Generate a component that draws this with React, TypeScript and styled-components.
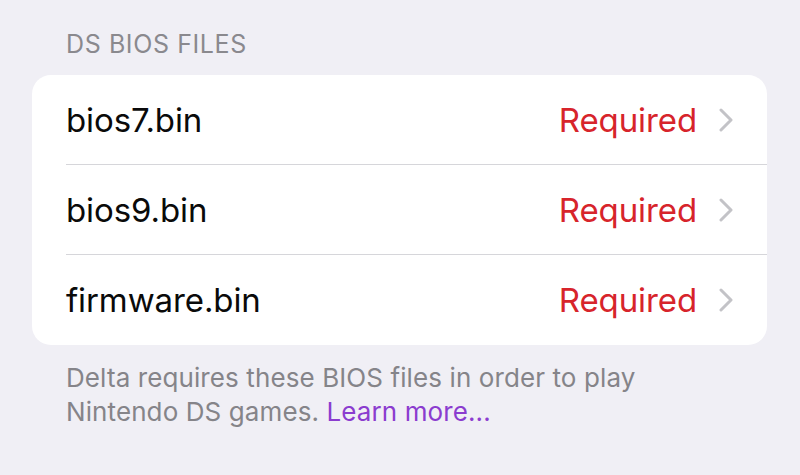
import React from "react";
import styled, { createGlobalStyle } from "styled-components";

const Global = createGlobalStyle`
  html, body { margin: 0; padding: 0; background: #f0eff5; }
  body { font-family: Inter, "Noto Sans", sans-serif; -webkit-font-smoothing: antialiased; }
`;

const Page = styled.div`
  width: 800px;
  height: 475px;
  box-sizing: border-box;
  padding: 29px 33px 0 32px;
  background: #f0eff5;
  overflow: hidden;
`;

const Header = styled.div`
  padding-left: 34px;
  font-size: 25px;
  line-height: 31px;
  color: #8a898e;
  letter-spacing: 0.6px;
  margin-bottom: 15px;
`;

const Card = styled.div`
  background: #ffffff;
  border-radius: 19px;
  overflow: hidden;
`;

const Row = styled.div`
  display: flex;
  align-items: center;
  height: 90px;
  padding-left: 34px;
  box-sizing: border-box;
`;

const RowInner = styled.div<{ $divider: boolean }>`
  flex: 1;
  height: 100%;
  display: flex;
  align-items: center;
  padding-right: 34px;
  border-bottom: ${(p) => (p.$divider ? "1px solid #d6d6da" : "none")};
  box-sizing: border-box;
`;

const Name = styled.span`
  flex: 1;
  font-size: 33px;
  color: #0a0a0a;
  letter-spacing: -0.1px;
`;

const Status = styled.span`
  font-size: 33px;
  color: #d7242b;
  margin-right: 22px;
  letter-spacing: -0.1px;
`;

const Footer = styled.p`
  margin: 16px 0 0 0;
  padding-left: 34px;
  font-size: 26px;
  line-height: 34px;
  color: #858489;
  letter-spacing: 0.1px;
`;

const Link = styled.span`
  color: #8b3ccf;
`;

const Chevron = () => (
  <svg width="14" height="24" viewBox="0 0 14 24">
    <path d="M2 2 L12 12 L2 22" fill="none" stroke="#c3c3c7" strokeWidth="3" strokeLinecap="round" strokeLinejoin="round" />
  </svg>
);

const files = ["bios7.bin", "bios9.bin", "firmware.bin"];

export default function App() {
  return (
    <Page>
      <Global />
      <Header>DS BIOS FILES</Header>
      <Card>
        {files.map((f, i) => (
          <Row key={f}>
            <RowInner $divider={i < files.length - 1}>
              <Name>{f}</Name>
              <Status>Required</Status>
              <Chevron />
            </RowInner>
          </Row>
        ))}
      </Card>
      <Footer>
        Delta requires these BIOS files in order to play
        <br />
        Nintendo DS games. <Link>Learn more...</Link>
      </Footer>
    </Page>
  );
}
